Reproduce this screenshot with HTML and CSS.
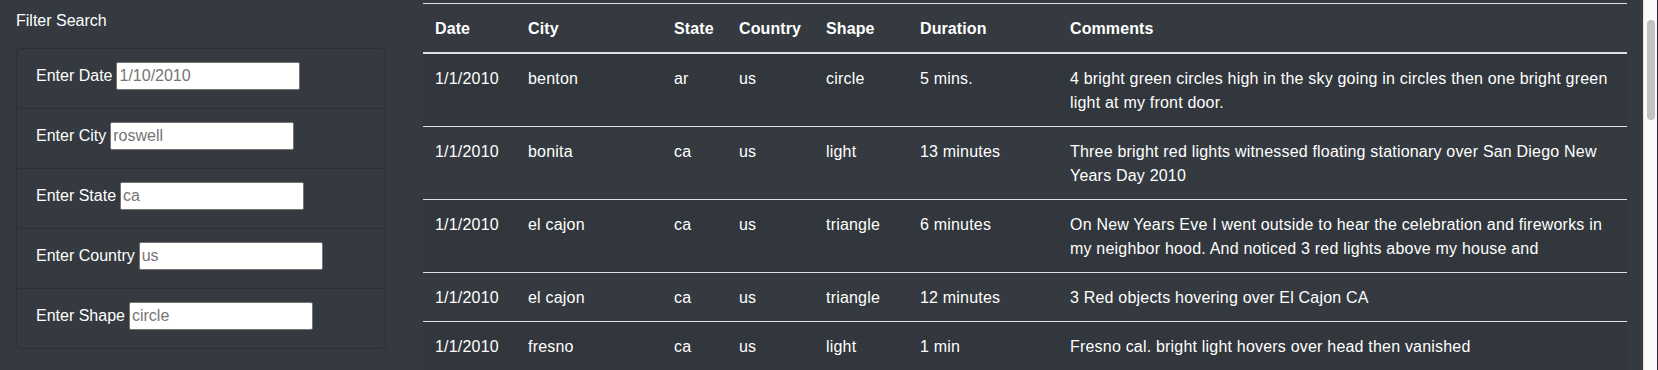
FILE: index.html
```html
<!DOCTYPE html>
<html lang="en">
<head>
<meta charset="utf-8">
<title>UFO Sightings</title>
<link rel="stylesheet" href="styles.css">
</head>
<body>
<div class="window">
  <div class="page">
    <aside class="filters">
      <div class="filters-title">Filter Search</div>
      <div class="filter-panel">
        <div class="filter-item"><label class="filter-label" for="f-date">Enter Date</label><input class="filter-input" id="f-date" type="text" placeholder="1/10/2010"></div>
        <div class="filter-item"><label class="filter-label" for="f-city">Enter City</label><input class="filter-input" id="f-city" type="text" placeholder="roswell"></div>
        <div class="filter-item"><label class="filter-label" for="f-state">Enter State</label><input class="filter-input" id="f-state" type="text" placeholder="ca"></div>
        <div class="filter-item"><label class="filter-label" for="f-country">Enter Country</label><input class="filter-input" id="f-country" type="text" placeholder="us"></div>
        <div class="filter-item"><label class="filter-label" for="f-shape">Enter Shape</label><input class="filter-input" id="f-shape" type="text" placeholder="circle"></div>
      </div>
    </aside>
    <main class="results">
      <table class="ufo-table">
        <colgroup>
          <col class="c-date"><col class="c-city"><col class="c-state"><col class="c-country"><col class="c-shape"><col class="c-duration"><col class="c-comments">
        </colgroup>
        <thead>
          <tr><th>Date</th><th>City</th><th>State</th><th>Country</th><th>Shape</th><th>Duration</th><th>Comments</th></tr>
        </thead>
        <tbody>
          <tr><td>1/1/2010</td><td>benton</td><td>ar</td><td>us</td><td>circle</td><td>5 mins.</td><td>4 bright green circles high in the sky going in circles then one bright green light at my front door.</td></tr>
          <tr><td>1/1/2010</td><td>bonita</td><td>ca</td><td>us</td><td>light</td><td>13 minutes</td><td>Three bright red lights witnessed floating stationary over San Diego New Years Day 2010</td></tr>
          <tr><td>1/1/2010</td><td>el cajon</td><td>ca</td><td>us</td><td>triangle</td><td>6 minutes</td><td>On New Years Eve I went outside to hear the celebration and fireworks in my neighbor hood. And noticed 3 red lights above my house and</td></tr>
          <tr><td>1/1/2010</td><td>el cajon</td><td>ca</td><td>us</td><td>triangle</td><td>12 minutes</td><td>3 Red objects hovering over El Cajon CA</td></tr>
          <tr><td>1/1/2010</td><td>fresno</td><td>ca</td><td>us</td><td>light</td><td>1 min</td><td>Fresno cal. bright light hovers over head then vanished</td></tr>
        </tbody>
      </table>
    </main>
  </div>
  <div class="scroll-rail" aria-hidden="true"><div class="scroll-thumb"></div></div>
</div>
</body>
</html>
```
FILE: styles.css
```css
html, body {
  margin: 0;
  height: 100%;
  overflow: hidden;
}
body {
  background: #343a40;
  color: #fff;
  font-family: "Liberation Sans", Arial, Helvetica, sans-serif;
  font-size: 16px;
  line-height: 1.5;
}
.window {
  display: flex;
  height: 100vh;
}
.page {
  flex: 1 1 auto;
  display: flex;
  align-items: flex-start;
  gap: 37px;
  padding: 0 16px;
  overflow: hidden;
}
.scroll-rail {
  flex: 0 0 14px;
  background: #fafafa;
  border-left: 1px solid #e4e4e4;
  border-right: 0;
  box-shadow: inset -1px 0 0 #3a1f36;
}
.scroll-thumb {
  width: 8px;
  height: 100px;
  margin: 20px 0 0 3px;
  border-radius: 4px;
  background: #c2c2c2;
}
.filters {
  flex: 0 0 370px;
  padding-top: 9px;
}
.filters-title {
  margin-bottom: 15px;
}
.filter-panel {
  border: 1px solid rgba(0, 0, 0, 0.16);
  border-radius: 4px;
}
.filter-item {
  display: flex;
  align-items: center;
  gap: 4px;
  height: 28px;
  padding: 13px 19px 18px;
}
.filter-item + .filter-item {
  border-top: 1px solid rgba(0, 0, 0, 0.16);
}
.filter-label {
  white-space: nowrap;
}
.filter-input {
  box-sizing: border-box;
  width: 184px;
  height: 28px;
  padding: 1px 2px;
  border: 1px solid #767676;
  border-radius: 2px;
  background: #fff;
  font-family: inherit;
  font-size: 16px;
  color: #757575;
}
.filter-input::placeholder {
  color: #757575;
  opacity: 1;
}
.results {
  flex: 0 0 1204px;
  padding-top: 3px;
}
.ufo-table {
  width: 1204px;
  border-collapse: collapse;
  table-layout: fixed;
}
.c-date { width: 93px; }
.c-city { width: 146px; }
.c-state { width: 65px; }
.c-country { width: 87px; }
.c-shape { width: 94px; }
.c-duration { width: 150px; }
.ufo-table th,
.ufo-table td {
  padding: 13px 12px 11px;
  text-align: left;
  vertical-align: top;
  border-top: 1px solid #dee2e6;
}
.ufo-table td {
  letter-spacing: 0.2px;
}
.ufo-table th {
  font-weight: bold;
  letter-spacing: 0.1px;
  border-bottom: 2px solid #dee2e6;
}
.ufo-table tbody tr:nth-of-type(odd) {
  background-color: rgba(0, 0, 0, 0.05);
}
```
